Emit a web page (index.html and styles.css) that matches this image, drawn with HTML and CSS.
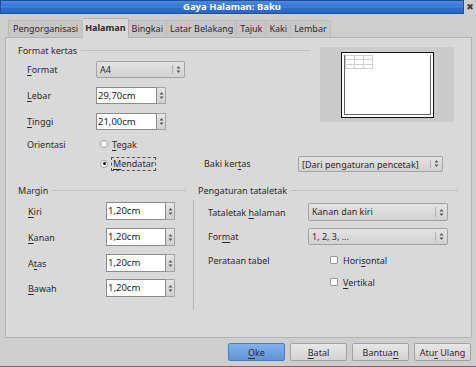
FILE: index.html
```html
<!DOCTYPE html>
<html lang="id">
<head>
  <meta charset="UTF-8">
  <title>Gaya Halaman: Baku</title>
  <link rel="stylesheet" href="styles.css">
</head>
<body>
  <svg class="defs" width="0" height="0">
    <symbol id="updown" viewBox="0 0 5 9">
      <path d="M2.5 1 L4.5 3.5 L0.5 3.5 Z M2.5 8 L4.5 5.5 L0.5 5.5 Z" fill="#5a5a5a"/>
    </symbol>
  </svg>

  <div class="window">
    <div class="titlebar">
      <div class="caption">Gaya Halaman: Baku</div>
      <div class="close">&#x2716;</div>
    </div>

    <div class="tabs">
      <div class="tab">Pengorganisasi</div>
      <div class="tab active">Halaman</div>
      <div class="tab">Bingkai</div>
      <div class="tab">Latar Belakang</div>
      <div class="tab">Tajuk</div>
      <div class="tab">Kaki</div>
      <div class="tab">Lembar</div>
    </div>

    <div class="panel">
      <div class="top">
        <div class="paper">
          <div class="group-title">Format kertas</div>

          <div class="row">
            <label class="lbl"><u>F</u>ormat</label>
            <div class="select sel-a4"><span>A4</span><i><svg><use href="#updown"/></svg></i></div>
          </div>
          <div class="row gap9">
            <label class="lbl"><u>L</u>ebar</label>
            <div class="spin"><span class="field">29,70cm</span><i><svg><use href="#updown"/></svg></i></div>
          </div>
          <div class="row gap9">
            <label class="lbl"><u>T</u>inggi</label>
            <div class="spin"><span class="field">21,00cm</span><i><svg><use href="#updown"/></svg></i></div>
          </div>
          <div class="row short gap8">
            <label class="lbl">Orientasi</label>
            <span class="radio"></span><span class="opt"><u>T</u>egak</span>
          </div>
        </div>

        <div class="preview">
          <div class="page">
            <div class="page-inner">
              <div class="mini-table">
                <span></span><span></span><span></span>
                <span></span><span></span><span></span>
                <span></span><span></span><span></span>
              </div>
            </div>
          </div>
        </div>
      </div>

      <div class="row landscape">
        <span class="lbl"></span>
        <div class="radio-item">
          <span class="radio checked"></span><span class="opt focus"><u>M</u>endatar</span>
        </div>
        <label class="tray-lbl">Baki ker<u>t</u>as</label>
        <div class="select sel-tray"><span>[Dari pengaturan pencetak]</span><i><svg><use href="#updown"/></svg></i></div>
      </div>

      <div class="bottom">
        <div class="margins">
          <div class="group-title">Margin</div>
          <div class="row tall gap5">
            <label class="lbl"><u>K</u>iri</label>
            <div class="spin"><span class="field">1,20cm</span><i><svg><use href="#updown"/></svg></i></div>
          </div>
          <div class="row tall gap8">
            <label class="lbl"><u>K</u>anan</label>
            <div class="spin"><span class="field">1,20cm</span><i><svg><use href="#updown"/></svg></i></div>
          </div>
          <div class="row tall gap8">
            <label class="lbl">A<u>t</u>as</label>
            <div class="spin"><span class="field">1,20cm</span><i><svg><use href="#updown"/></svg></i></div>
          </div>
          <div class="row tall gap7">
            <label class="lbl"><u>B</u>awah</label>
            <div class="spin"><span class="field">1,20cm</span><i><svg><use href="#updown"/></svg></i></div>
          </div>
        </div>

        <div class="layout">
          <div class="group-title">Pengaturan tataletak</div>
          <div class="layout-body">
            <div class="row tall">
              <label class="lbl">Tataletak <u>h</u>alaman</label>
              <div class="select sel-wide"><span>Kanan dan kiri</span><i><svg><use href="#updown"/></svg></i></div>
            </div>
            <div class="row gap7">
              <label class="lbl">For<u>m</u>at</label>
              <div class="select sel-wide"><span>1, 2, 3, ...</span><i><svg><use href="#updown"/></svg></i></div>
            </div>
            <div class="row short gap9">
              <label class="lbl">Perataan tabel</label>
              <span class="check"></span><span class="opt">Hori<u>s</u>ontal</span>
            </div>
            <div class="row short gap10">
              <span class="lbl"></span>
              <span class="check"></span><span class="opt"><u>V</u>ertikal</span>
            </div>
          </div>
        </div>
      </div>
    </div>

    <div class="buttons">
      <button class="btn default"><u>O</u>ke</button>
      <button class="btn"><u>B</u>atal</button>
      <button class="btn">Bantua<u>n</u></button>
      <button class="btn">Atu<u>r</u> Ulang</button>
    </div>
  </div>
</body>
</html>
```

FILE: styles.css
```css
* {
  box-sizing: border-box;
}

body {
  margin: 0;
  font-family: "Noto Sans", "DejaVu Sans", sans-serif;
  font-size: 9px;
  color: #2b2b2b;
}

u {
  text-decoration-thickness: 1px;
  text-underline-offset: 2px;
}

.defs {
  position: absolute;
}

.window {
  width: 476px;
  height: 367px;
  background: #cecece;
  border-bottom: 1px solid #6a6a6a;
  display: flex;
  flex-direction: column;
}

/* title bar */
.titlebar {
  display: flex;
  height: 14px;
}

.caption {
  flex: 1;
  background: linear-gradient(#4b8ce0, #3477d4 45%, #5b9ae6 50%, #2f6fcc 56%, #2a67c2);
  border: 1px solid #1e4f9c;
  color: #fff;
  font-weight: bold;
  font-size: 9.5px;
  line-height: 12px;
  text-align: center;
}

.close {
  width: 12px;
  color: #3f3f3f;
  font-size: 9px;
  line-height: 14px;
  text-align: center;
}

/* tabs */
.tabs {
  display: flex;
  margin-top: 4px;
  padding-left: 8px;
  height: 19px;
}

.tab {
  padding: 0 3px;
  background: #c7c7c7;
  border: 1px solid #bcbcbc;
  border-bottom: none;
  border-left: none;
  margin-top: 2px;
  line-height: 16px;
}

.tab:first-child {
  border-left: 1px solid #bcbcbc;
  padding: 0 4px;
}

.tab.active {
  background: #d9d9d9;
  font-weight: bold;
  border-color: #b3b3b3;
  margin-top: 0;
  padding: 0 2px;
  line-height: 18px;
  position: relative;
  z-index: 1;
  height: 20px;
}

/* panel */
.panel {
  margin: 0 4px 0 5px;
  height: 301px;
  background: #d9d9d9;
  border: 1px solid #b3b3b3;
  padding: 5px 0 0 12px;
}

.group-title {
  display: flex;
  align-items: center;
  height: 14px;
}

.group-title::after {
  content: "";
  flex: 1;
  height: 1px;
  margin-left: 4px;
  background: #bfbfbf;
}

.top {
  display: flex;
}

.paper {
  width: 292px;
}

.row {
  display: flex;
  align-items: center;
  height: 17px;
  margin-top: 4px;
}

.row.tall {
  height: 18px;
}

.row.short {
  height: 12px;
}

.gap5 { margin-top: 5px; }
.gap7 { margin-top: 7px; }
.gap8 { margin-top: 8px; }
.gap9 { margin-top: 9px; }
.gap10 { margin-top: 10px; }

.lbl {
  width: 78px;
  padding-left: 9px;
  flex: none;
}

/* fields */
.select {
  display: flex;
  height: 100%;
  background: linear-gradient(#e3e3e3, #d2d2d2);
  border: 1px solid #a3a3a3;
  border-radius: 2px;
}

.select span {
  flex: 1;
  padding-left: 3px;
  line-height: 15px;
  white-space: nowrap;
  overflow: hidden;
}

.select i,
.spin i {
  display: flex;
  align-items: center;
  justify-content: center;
}

.select i {
  width: 12px;
  margin: 3px 0;
  border-left: 1px solid #b0b0b0;
}

.select svg,
.spin svg {
  width: 5px;
  height: 9px;
}

.sel-a4 {
  width: 89px;
}

.sel-tray {
  width: 145px;
  height: 16px;
}

.sel-wide {
  width: 140px;
}

.spin {
  display: flex;
  height: 100%;
}

.spin .field {
  width: 61px;
  background: #fff;
  border: 1px solid #8c8c8c;
  padding-left: 1px;
  line-height: 15px;
  font-size: 9.5px;
  color: #1e1e1e;
}

.spin i {
  width: 9px;
  background: linear-gradient(#e4e4e4, #d0d0d0);
  border: 1px solid #a3a3a3;
  border-left: none;
}

/* radio and check */
.radio,
.check {
  width: 8px;
  height: 8px;
  flex: none;
  background: #fff;
  border: 1px solid #9a9a9a;
}

.radio {
  border-radius: 50%;
  margin: 0 4px 0 4px;
  position: relative;
}

.radio.checked::after {
  content: "";
  position: absolute;
  left: 1.5px;
  top: 1.5px;
  width: 3px;
  height: 3px;
  border-radius: 50%;
  background: #111;
}

.check {
  border-radius: 1px;
  margin: 0 5px 0 22px;
}

.opt {
  white-space: nowrap;
}

.focus {
  border: 1px dashed #555;
  padding: 0 1px;
  line-height: 12px;
  margin-left: -1px;
}

/* preview */
.preview {
  width: 134px;
  height: 75px;
  margin: 4px 0 0 10px;
  background: #cbcbcb;
  display: flex;
  justify-content: center;
  align-items: center;
}

.page {
  width: 93px;
  height: 66px;
  background: #fff;
  border: 1.5px solid #111;
  padding: 2px;
}

.page-inner {
  height: 100%;
  border: 1.5px solid #666;
  border-top: none;
}

.mini-table {
  width: 28px;
  display: grid;
  grid-template-columns: repeat(3, 1fr);
  border-top: 1px solid #cfcfcf;
  border-left: 1px solid #cfcfcf;
}

.mini-table span {
  height: 4.5px;
  border-right: 1px solid #cfcfcf;
  border-bottom: 1px solid #cfcfcf;
}

/* landscape row */
.landscape {
  margin-top: 5px;
}

.radio-item {
  width: 108px;
  display: flex;
  align-items: center;
}

.tray-lbl {
  width: 94px;
}

/* bottom groups */
.bottom {
  display: flex;
  margin-top: 11px;
}

.margins {
  width: 168px;
  margin-right: 7px;
}

.margins .lbl {
  width: 88px;
  padding-left: 10px;
}

.margins .spin .field {
  width: 60px;
}

.layout {
  width: 265px;
}

.layout .group-title {
  padding-left: 5px;
}

.layout-body {
  margin-top: 3px;
  height: 110px;
  border-left: 1px solid #b5b5b5;
  padding-top: 3px;
}

.layout-body .row:first-child {
  margin-top: 0;
}

.layout-body .lbl {
  width: 114px;
  padding-left: 14px;
}

/* buttons */
.buttons {
  display: flex;
  justify-content: flex-end;
  gap: 5px;
  margin-top: 5px;
  padding-right: 5px;
}

.btn {
  width: 57px;
  height: 18px;
  padding: 0;
  font-family: inherit;
  font-size: 9px;
  color: #2b2b2b;
  background: linear-gradient(#e7e7e7, #d3d3d3);
  border: 1px solid #a2a2a2;
  border-radius: 2px;
}

.btn.default {
  background: linear-gradient(#82b3ea, #5e93d7);
  border-color: #4a7cbf;
}
```
